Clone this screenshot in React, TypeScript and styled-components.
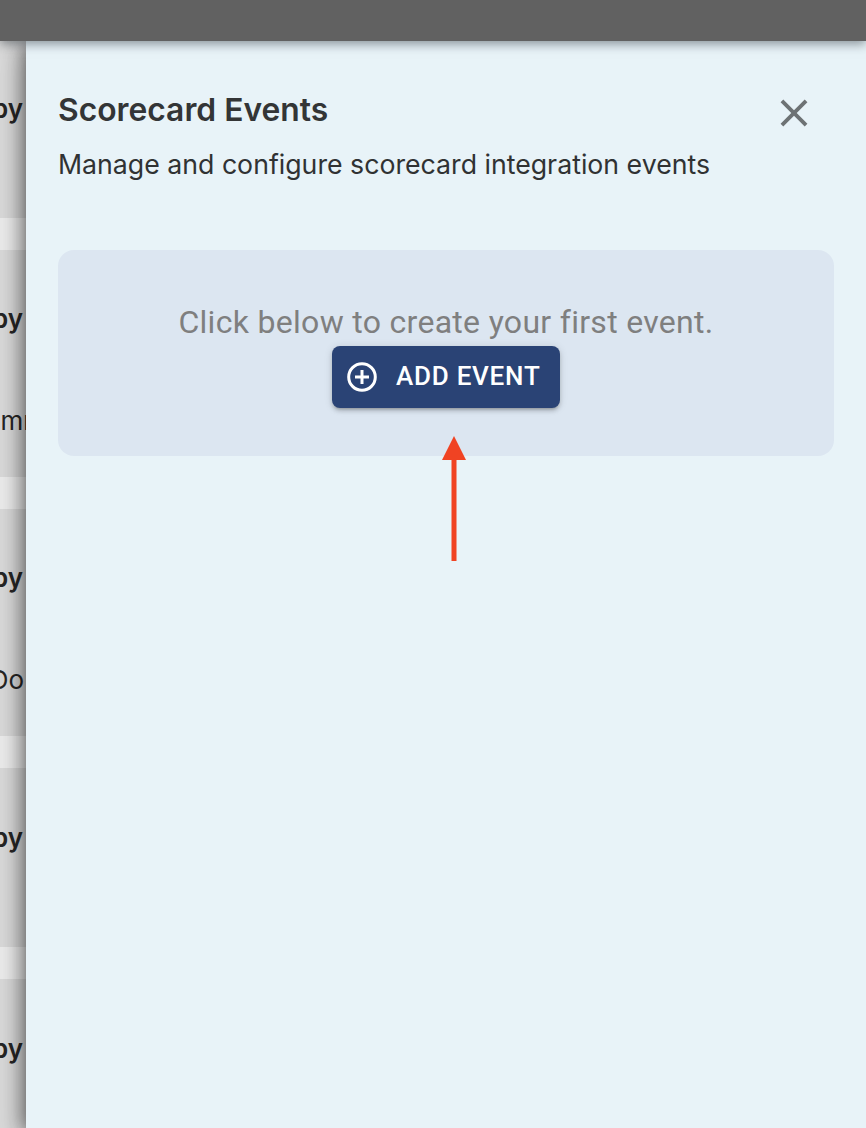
import React, { FC } from 'react';
import styled, { createGlobalStyle } from 'styled-components';

const GlobalStyle = createGlobalStyle`
  html, body {
    margin: 0;
    padding: 0;
    height: 100%;
    overflow: hidden;
    background: #d2d2d2;
  }
  #root {
    height: 100%;
  }
`;

const Page = styled.div`
  display: flex;
  flex-direction: column;
  height: 1128px;
  font-family: Inter, "Liberation Sans", sans-serif;
  color: #2f2f2f;
`;

const TopBar = styled.div`
  position: relative;
  z-index: 2;
  flex: 0 0 41px;
  background: #616161;
  box-shadow: 0 3px 10px rgba(40, 50, 55, 0.5);
`;

const Body = styled.div`
  display: flex;
  flex: 1;
  min-height: 0;
`;

const Backdrop = styled.div`
  flex: 0 0 26px;
  overflow: hidden;
  display: flex;
  flex-direction: column;
`;

const Row = styled.div<{ $height: number; $stripe?: boolean }>`
  flex: 0 0 ${({ $height }) => $height}px;
  background: ${({ $stripe }) => ($stripe ? '#ebebeb' : '#d9d9d9')};
`;

const Cell = styled.div<{ $height: number; $bold?: boolean; $right: number }>`
  display: flex;
  justify-content: flex-end;
  align-items: center;
  height: ${({ $height }) => $height}px;
  margin-right: ${({ $right }) => $right}px;
  font-size: 26px;
  font-weight: ${({ $bold }) => ($bold ? 600 : 400)};
  white-space: nowrap;
  color: #262626;
`;

const Drawer = styled.div`
  position: relative;
  z-index: 1;
  flex: 1;
  box-sizing: border-box;
  padding: 49px 32px 0 32px;
  background: #e8f3f8;
  box-shadow: -4px 0 16px rgba(0, 0, 0, 0.36), 0 8px 10px -5px rgba(0, 0, 0, 0.2),
    0 16px 24px 2px rgba(0, 0, 0, 0.14), 0 6px 30px 5px rgba(0, 0, 0, 0.12);
`;

const Header = styled.div`
  display: flex;
  justify-content: space-between;
  align-items: flex-start;
`;

const Title = styled.h2`
  margin: 0;
  font-size: 31.8px;
  line-height: 40px;
  font-weight: 600;
  color: #333536;
`;

const Subtitle = styled.p`
  margin: 17px 0 0;
  font-size: 26.7px;
  line-height: 34px;
  font-weight: 400;
  color: #303233;
`;

const CloseButton = styled.button`
  display: flex;
  border: 0;
  padding: 0;
  margin: 0 17px 0 0;
  background: none;
  color: #6d7274;
`;

const EmptyCard = styled.div`
  display: flex;
  flex-direction: column;
  align-items: center;
  box-sizing: border-box;
  height: 206px;
  margin-top: 69px;
  padding-top: 52px;
  border-radius: 16px;
  background: #dce6f1;
`;

const EmptyText = styled.div`
  font-family: Roboto, "Liberation Sans", sans-serif;
  font-size: 32px;
  line-height: 40px;
  letter-spacing: 0.3px;
  color: #7f7f7f;
`;

const AddButton = styled.button`
  display: flex;
  align-items: center;
  gap: 19px;
  box-sizing: border-box;
  width: 228px;
  height: 62px;
  margin-top: 4px;
  padding: 0 0 2px 15px;
  border: 0;
  border-radius: 8px;
  background: #2a4375;
  color: #ffffff;
  font-family: Roboto, "Liberation Sans", sans-serif;
  font-size: 26px;
  font-weight: 500;
  letter-spacing: 0.75px;
  box-shadow: 0 3px 3px -2px rgba(0, 0, 0, 0.2), 0 3px 4px rgba(0, 0, 0, 0.14),
    0 1px 8px rgba(0, 0, 0, 0.12);
`;

const AddIcon = styled.svg`
  flex: none;
  margin-top: 2px;
`;

const Arrow = styled.svg`
  position: absolute;
  left: 410px;
  top: 393px;
`;

const backdropRows: {
  height: number;
  stripe?: boolean;
  cells?: { text: string; bold?: boolean; right: number; h: number }[];
}[] = [
  { height: 177, cells: [{ text: 'by', bold: true, right: 3, h: 134 }] },
  { height: 32, stripe: true },
  {
    height: 227,
    cells: [
      { text: 'by', bold: true, right: 3, h: 137 },
      { text: 'Comm', right: -20, h: 66 },
    ],
  },
  { height: 32, stripe: true },
  {
    height: 227,
    cells: [
      { text: 'by', bold: true, right: 3, h: 137 },
      { text: 'Do', right: 2, h: 66 },
    ],
  },
  { height: 32, stripe: true },
  { height: 179, cells: [{ text: 'by', bold: true, right: 3, h: 138 }] },
  { height: 32, stripe: true },
  { height: 149, cells: [{ text: 'by', bold: true, right: 3, h: 138 }] },
];

const App: FC = () => {
  return (
    <Page>
      <GlobalStyle />
      <TopBar />
      <Body>
        <Backdrop>
          {backdropRows.map((row, i) => (
            <Row key={i} $height={row.height} $stripe={row.stripe}>
              {row.cells?.map((cell) => (
                <Cell key={cell.text} $height={cell.h} $bold={cell.bold} $right={cell.right}>
                  {cell.text}
                </Cell>
              ))}
            </Row>
          ))}
        </Backdrop>
        <Drawer>
          <Header>
            <div>
              <Title>Scorecard Events</Title>
              <Subtitle>Manage and configure scorecard integration events</Subtitle>
            </div>
            <CloseButton aria-label="Close">
              <svg width="46" height="46" viewBox="0 0 24 24" fill="currentColor">
                <path d="M19 6.41 17.59 5 12 10.59 6.41 5 5 6.41 10.59 12 5 17.59 6.41 19 12 13.41 17.59 19 19 17.59 13.41 12z" />
              </svg>
            </CloseButton>
          </Header>
          <EmptyCard>
            <EmptyText>Click below to create your first event.</EmptyText>
            <AddButton>
              <AddIcon width="30" height="30" viewBox="0 0 30 30" fill="none" stroke="currentColor" strokeWidth="3">
                <circle cx="15" cy="15" r="13.3" />
                <path d="M15 8v14M8 15h14" />
              </AddIcon>
              ADD EVENT
            </AddButton>
          </EmptyCard>
          <Arrow width="36" height="130" viewBox="0 0 36 130">
            <path d="M18 2 30 26H20.5V127H15.5V26H6z" fill="#f04323" />
          </Arrow>
        </Drawer>
      </Body>
    </Page>
  );
};

export default App;
